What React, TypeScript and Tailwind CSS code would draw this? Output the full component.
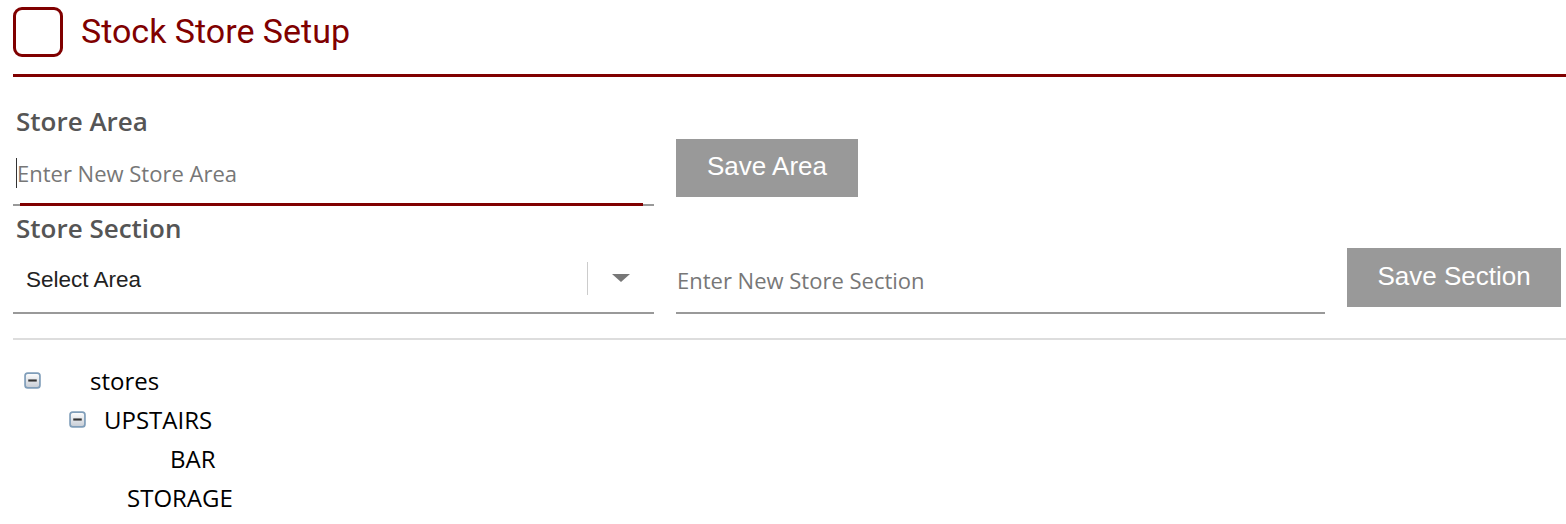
import React from 'react';

function MinusBox() {
  return (
    <svg width="17" height="17" viewBox="0 0 16 16" className="shrink-0">
      <defs>
        <linearGradient id="mb" x1="0" y1="0" x2="0" y2="1">
          <stop offset="0" stopColor="#ffffff" />
          <stop offset="1" stopColor="#c5cbd4" />
        </linearGradient>
      </defs>
      <rect x="1" y="1" width="14" height="14" rx="2.5" fill="url(#mb)" stroke="#7f9db9" strokeWidth="1.6" />
      <rect x="4" y="7" width="8" height="2" fill="#333" />
    </svg>
  );
}

export default function App() {
  const open = { fontFamily: '"Open Sans", "Liberation Sans", sans-serif' };
  const arial = { fontFamily: '"Liberation Sans", Arial, sans-serif' };

  return (
    <div className="w-[1566px] h-[524px] bg-white overflow-hidden pl-[13px]">
      {/* header */}
      <div className="flex items-start pt-[7px] h-[77px] border-b-[3px] border-[#800000]">
        <div className="w-[50px] h-[50px] rounded-[9px] border-[3px] border-[#800000]" />
        <h1
          className="ml-[18px] mt-[4px] text-[34px] leading-[40px] text-[#800000]"
          style={{ fontFamily: 'Roboto, "Liberation Sans", sans-serif' }}
        >
          Stock Store Setup
        </h1>
      </div>

      {/* store area */}
      <div className="pl-[3px] mt-[28px] text-[26px] leading-[32px] font-semibold text-[#555]" style={open}>
        Store Area
      </div>
      <div className="flex items-start">
        <div className="w-[641px] relative border-b-2 border-[#999]">
          <input
            className="w-full h-[67px] pl-[4px] pt-[5px] text-[22px] text-[#333] outline-none placeholder:text-[#777]"
            style={open}
            placeholder="Enter New Store Area"
          />
          <div className="absolute left-[3px] top-[21px] w-[1px] h-[30px] bg-[#333]" />
          <div className="absolute left-[7px] right-[11px] bottom-[-2px] h-[3px] bg-[#800000]" />
        </div>
        <button
          className="ml-[22px] mt-[2px] w-[182px] h-[58px] pb-[3px] bg-[#999] text-white text-[26px]"
          style={arial}
        >
          Save Area
        </button>
      </div>

      {/* store section */}
      <div className="pl-[3px] mt-[6px] text-[26px] leading-[32px] font-semibold text-[#555]" style={open}>
        Store Section
      </div>
      <div className="flex items-start">
        <div className="w-[641px] h-[70px] flex items-center border-b-2 border-[#999]">
          <span className="flex-1 pl-[13px] pt-[4px] text-[22.5px] text-[#222]" style={arial}>
            Select Area
          </span>
          <div className="w-px h-[33px] bg-[#ccc]" />
          <div className="w-[66px] flex justify-center">
            <svg width="18" height="8" viewBox="0 0 18 8">
              <path d="M0 0 L18 0 L9 8 Z" fill="#777" />
            </svg>
          </div>
        </div>
        <div className="ml-[22px] w-[649px] h-[70px] flex items-center border-b-2 border-[#999]">
          <input
            className="w-full pl-[1px] pt-[4px] text-[22px] outline-none placeholder:text-[#777]"
            style={open}
            placeholder="Enter New Store Section"
          />
        </div>
        <button
          className="ml-[22px] mt-[4px] w-[214px] h-[59px] pb-[2px] bg-[#999] text-white text-[26px]"
          style={arial}
        >
          Save Section
        </button>
      </div>

      {/* divider */}
      <div className="mt-[24px] h-[2px] bg-[#ddd]" />

      {/* tree */}
      <div className="mt-[21px] text-[24px] text-black" style={open}>
        <div className="flex items-center h-[39px] pl-[11px]">
          <MinusBox />
          <span className="ml-[49px]">stores</span>
        </div>
        <div className="flex items-center h-[39px] pl-[56px]">
          <MinusBox />
          <span className="ml-[18px]">UPSTAIRS</span>
        </div>
        <div className="flex items-center h-[39px] pl-[157px]">BAR</div>
        <div className="flex items-center h-[39px] pl-[114px]">STORAGE</div>
      </div>
    </div>
  );
}
